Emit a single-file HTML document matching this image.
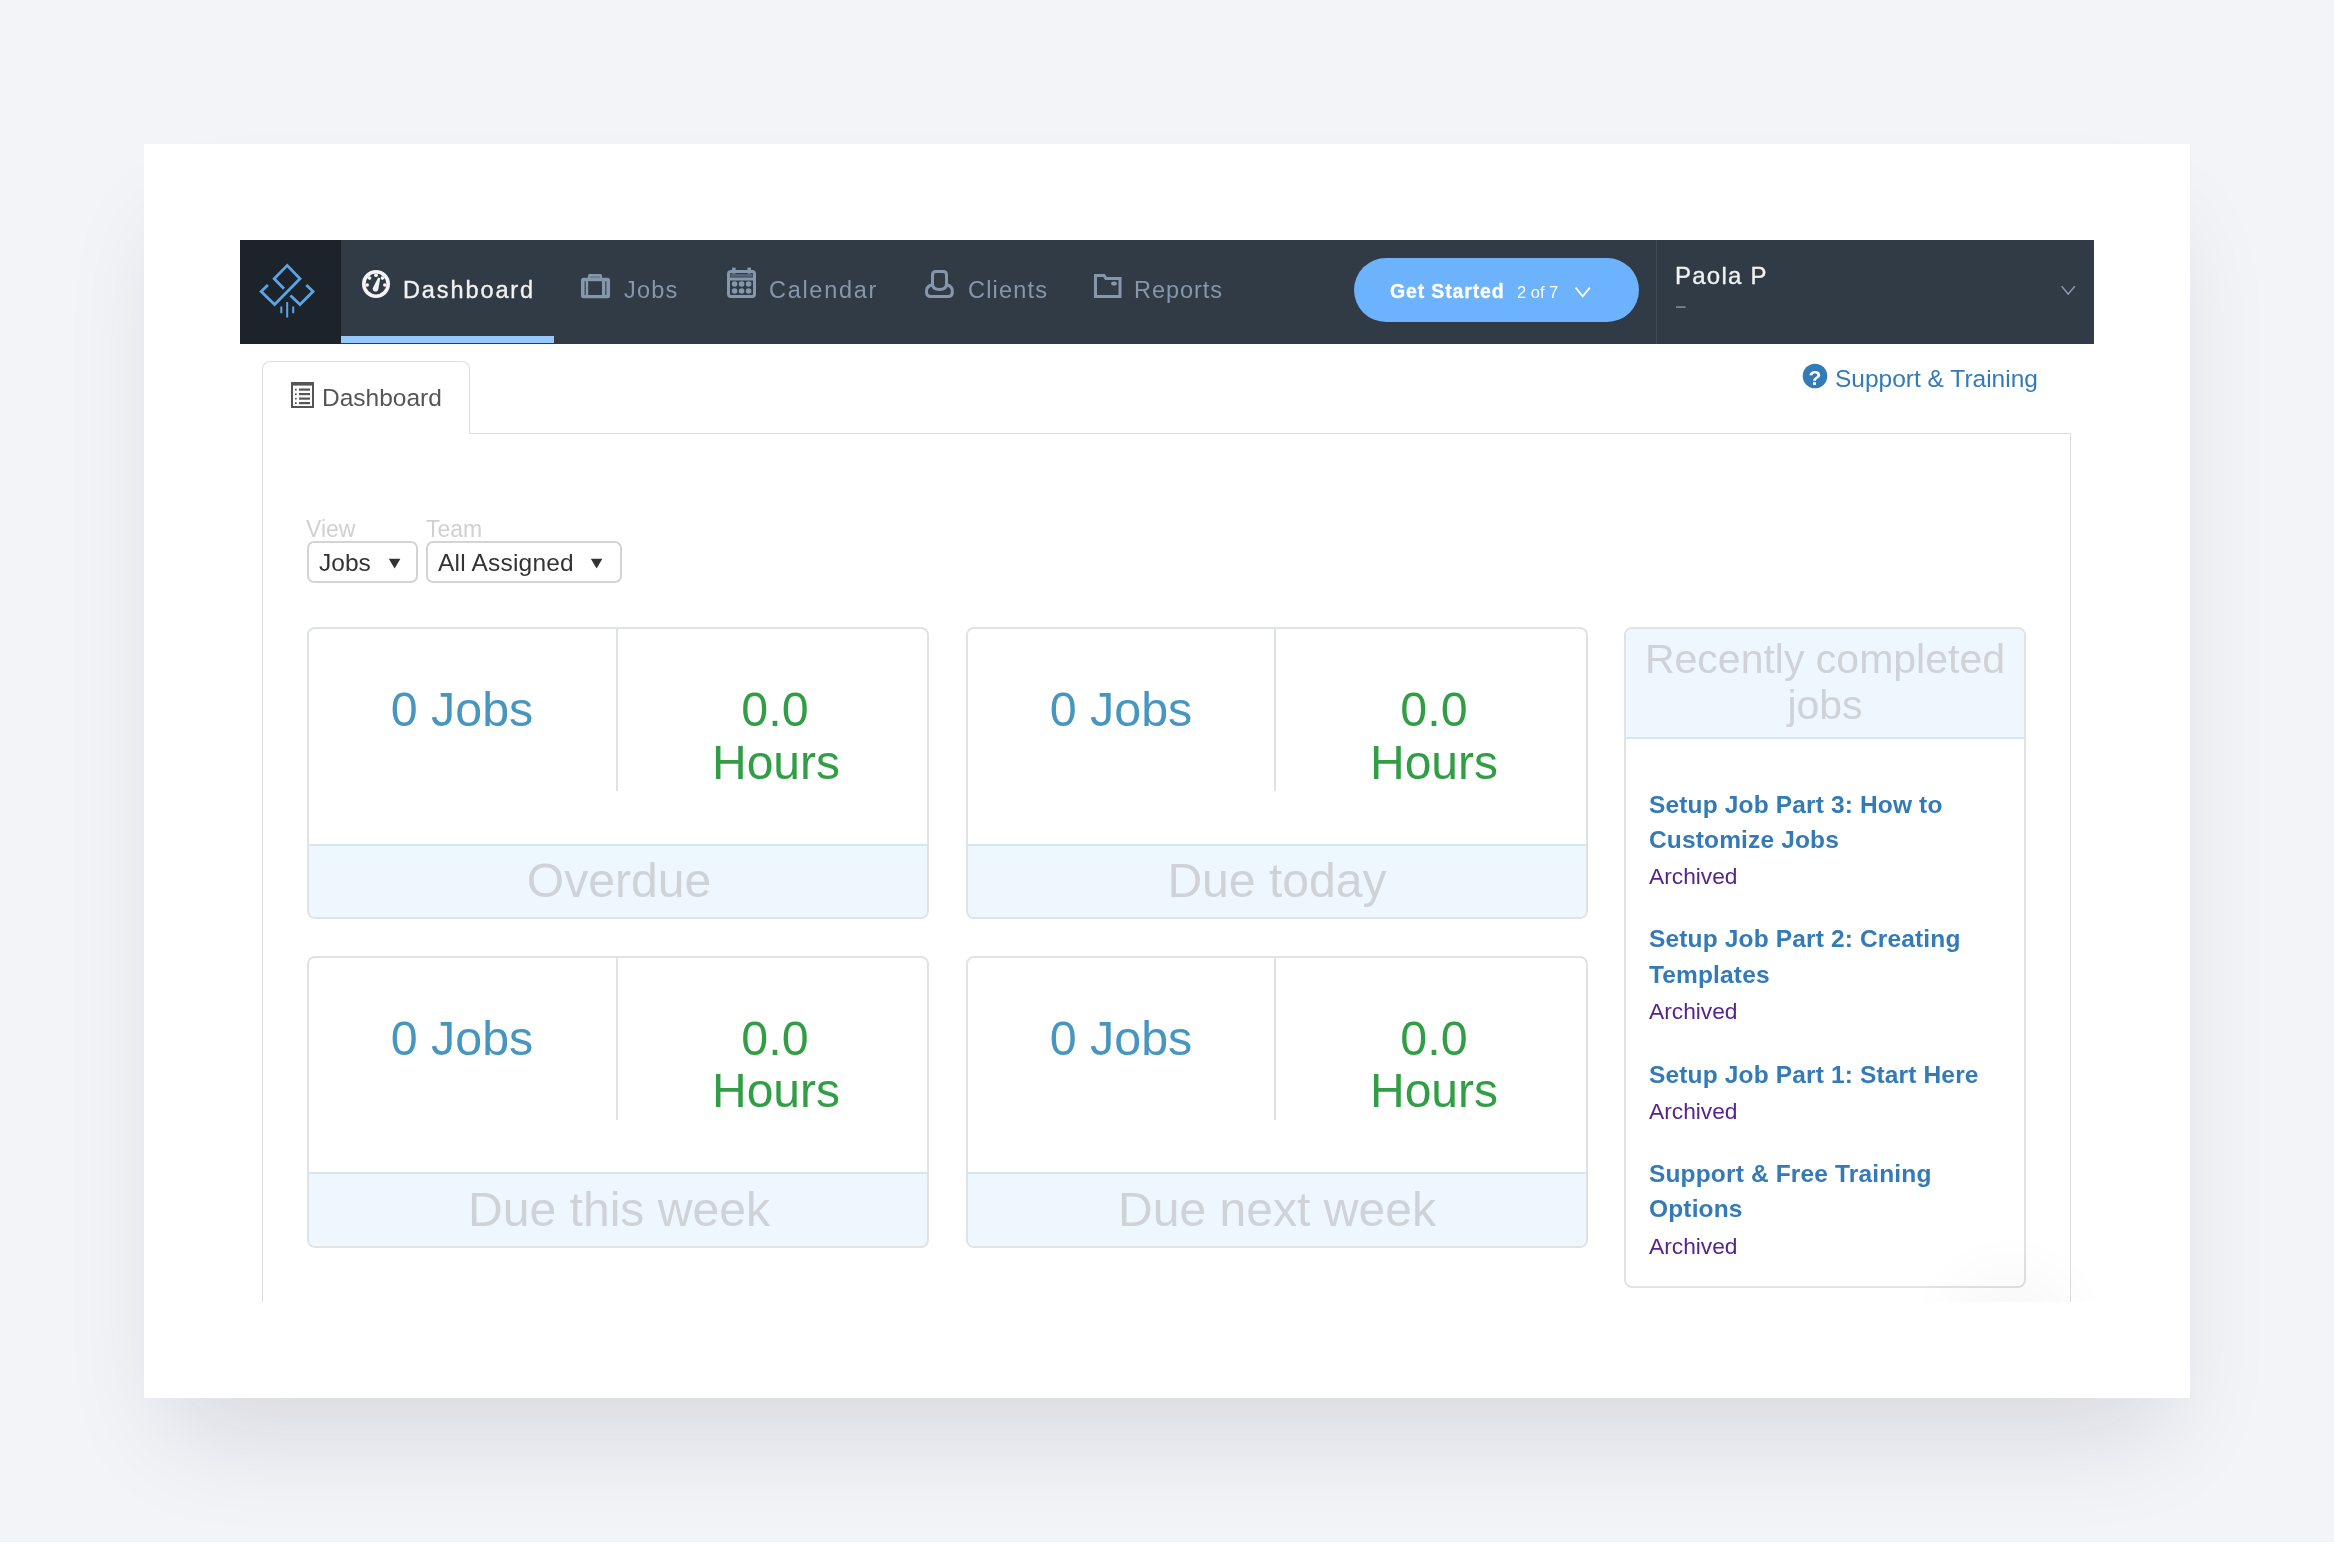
<!DOCTYPE html><html><head><meta charset="utf-8"><title>Dashboard</title><style>
*{margin:0;padding:0;box-sizing:border-box}
html,body{width:2334px;height:1560px;overflow:hidden;background:#fff;font-family:"Liberation Sans",sans-serif}
.abs{position:absolute}
.t{position:absolute;white-space:nowrap;will-change:transform}
#bg{position:absolute;left:0;top:0;width:2334px;height:1542px;background:#f3f4f8}
#card{position:absolute;left:144px;top:144px;width:2046px;height:1254px;background:#fff;
  box-shadow:0 60px 100px -25px rgba(20,20,35,0.12)}
#nav{position:absolute;left:240px;top:240px;width:1854px;height:103.5px;background:#303b45}
#logo{position:absolute;left:240px;top:240px;width:101px;height:103.5px;background:#1d232b}
#uline{position:absolute;left:341px;top:336.2px;width:213px;height:7.3px;background:#96c8fc}
#gs{position:absolute;left:1354px;top:258px;width:285px;height:64px;border-radius:32px;background:#6cb2fc}
#vdiv{position:absolute;left:1656px;top:240px;width:1.2px;height:103.5px;background:#3e4a56}
.box{position:absolute;border:2px solid #dfe3e5;border-radius:8px;background:#fff;overflow:hidden}
.foot{position:absolute;left:0;right:0;bottom:0;background:#edf7fd;border-top:2px solid #d3e6f2}
.sel{position:absolute;border:2px solid #d4d4d4;border-radius:7px;background:#fff}
</style></head><body>
<div id="bg"></div><div id="card"></div>
<div id="nav"></div><div id="logo"></div><div id="uline"></div><div id="vdiv"></div>
<div id="gs"></div>
<svg class="abs" style="left:0;top:0" width="2334" height="1560" viewBox="0 0 2334 1560"><path d="M284,288.7 L274.2,278.8 L287.2,265.4 L300,278.8 L274.6,304.5 L261.2,291.5 L267.9,285.1" fill="none" stroke="#5aa5e6" stroke-width="2.8" stroke-linejoin="miter"/><path d="M306.3,285.1 L313,291.5 L300,304.5 L290.4,295.4" fill="none" stroke="#5aa5e6" stroke-width="2.8"/><path d="M287.2,302 V317.6 M281.3,306.6 V313.3 M293.2,306.6 V313.3" fill="none" stroke="#5aa5e6" stroke-width="2"/><circle cx="376" cy="284" r="12.2" fill="none" stroke="#f4f4f4" stroke-width="3.6"/><g fill="#f4f4f4"><circle cx="376" cy="275.2" r="1.9"/><circle cx="369.6" cy="278.1" r="1.8"/><circle cx="382.4" cy="278.1" r="1.8"/><circle cx="367.2" cy="285" r="1.8"/><circle cx="384.8" cy="285" r="1.8"/><path d="M372.6,288.4 L378.2,277.4 L380.2,278.2 L378.2,290 A3,3 0 0 1 372.6,288.4 Z"/></g><g fill="#8797ab"><rect x="588" y="274" width="14" height="5" rx="1.5"/><rect x="581" y="277.8" width="29" height="20.4" rx="2.5"/></g><g fill="#303b45"><rect x="588.2" y="281.2" width="13.8" height="13.8"/><rect x="584.6" y="281.2" width="1.1" height="13.8"/><rect x="605.3" y="281.2" width="1.1" height="13.8"/><rect x="590" y="276.6" width="10" height="1" opacity=".5"/></g><rect x="728.5" y="271.5" width="26" height="25" rx="2.5" fill="none" stroke="#8797ab" stroke-width="3"/><g fill="#8797ab"><rect x="732" y="267.6" width="3.6" height="6"/><rect x="747.4" y="267.6" width="3.6" height="6"/><rect x="729" y="277.5" width="25" height="3"/><rect x="730.5" y="274" width="22" height="2.8" opacity=".45"/><circle cx="734.6" cy="284" r="2.8"/><circle cx="741.6" cy="284" r="2.8"/><circle cx="748.6" cy="284" r="2.8"/><circle cx="734.6" cy="291" r="2.8"/><circle cx="741.6" cy="291" r="2.8"/><circle cx="748.6" cy="291" r="2.8"/></g><g fill="none" stroke="#8797ab" stroke-width="3" stroke-linejoin="round"><path d="M932.5,284 V275 Q932.5,271.5 936,271.5 H943 Q946.5,271.5 946.5,275 V284 Q946.5,289.5 939.5,289.5 Q932.5,289.5 932.5,284 Z"/><path d="M932.3,284.8 Q926.5,286 926.5,291 V292 Q926.5,296.5 931,296.5 H948 Q952.3,296.5 952.3,292 V291 Q952.3,286 946.7,284.8"/></g><path d="M1095.5,275.5 H1104 L1106,278.5 H1120 V296.6 H1095.5 Z" fill="none" stroke="#8797ab" stroke-width="3" stroke-linejoin="miter"/><ellipse cx="1114" cy="283.6" rx="2.9" ry="2" fill="#8797ab"/><path d="M1575.6,287.6 L1582.7,296.4 L1589.8,287.6" fill="none" stroke="#ffffff" stroke-width="1.7"/><path d="M2061.6,286.2 L2068.2,294 L2074.8,286.2" fill="none" stroke="#8797ab" stroke-width="1.5"/><rect x="1676" y="306.4" width="9.6" height="1.4" fill="#8797ab"/></svg>
<div class="t" style="top:278.70px;font-size:23.5px;line-height:23.5px;color:#f2f2f2;font-weight:400;letter-spacing:1.9px;left:403.40px;-webkit-text-stroke:0.35px currentColor;">Dashboard</div>
<div class="t" style="top:278.70px;font-size:23.5px;line-height:23.5px;color:#8797ab;font-weight:400;letter-spacing:1.2px;left:624.00px;">Jobs</div>
<div class="t" style="top:278.70px;font-size:23.5px;line-height:23.5px;color:#8797ab;font-weight:400;letter-spacing:1.7px;left:769.00px;">Calendar</div>
<div class="t" style="top:278.70px;font-size:23.5px;line-height:23.5px;color:#8797ab;font-weight:400;letter-spacing:1.2px;left:967.50px;">Clients</div>
<div class="t" style="top:278.70px;font-size:23.5px;line-height:23.5px;color:#8797ab;font-weight:400;letter-spacing:0.95px;left:1133.50px;">Reports</div>
<div class="t" style="top:282.09px;font-size:19.5px;line-height:19.5px;color:#ffffff;font-weight:700;letter-spacing:0.85px;left:1389.50px;-webkit-text-stroke:0.3px #fff;">Get Started</div>
<div class="t" style="top:284.03px;font-size:16.5px;line-height:16.5px;color:#ffffff;font-weight:400;left:1517.40px;">2 of 7</div>
<div class="t" style="top:263.98px;font-size:24px;line-height:24px;color:#f2f2f2;font-weight:400;letter-spacing:1.25px;left:1675.00px;-webkit-text-stroke:0.35px currentColor;">Paola P</div>
<div class="abs" style="left:262px;top:361px;width:208px;height:73px;border:1.5px solid #dedede;border-bottom:none;border-radius:8px 8px 0 0;background:#fff"></div>
<div class="abs" style="left:469.2px;top:432.6px;width:1602px;height:1.5px;background:#dedede"></div>
<div class="abs" style="left:261.5px;top:434px;width:1.5px;height:868px;background:#dedede"></div>
<div class="abs" style="left:2069.8px;top:433px;width:1.5px;height:869px;background:#dedede"></div>
<svg class="abs" style="left:0;top:0" width="2334" height="1560" viewBox="0 0 2334 1560"><rect x="292" y="383" width="21" height="24" fill="none" stroke="#555" stroke-width="2"/><rect x="291" y="382" width="23" height="3.6" fill="#555"/><g fill="#555"><rect x="299" y="388.5" width="11" height="2.2"/><rect x="299" y="393" width="11" height="2.2"/><rect x="299" y="397.5" width="11" height="2.2"/><rect x="299" y="402" width="11" height="2.2"/><rect x="295" y="388.8" width="1.7" height="1.7"/><rect x="295" y="393.3" width="1.7" height="1.7"/><rect x="295" y="397.8" width="1.7" height="1.7"/><rect x="295" y="402.3" width="1.7" height="1.7"/></g></svg>
<div class="t" style="top:386.06px;font-size:24.5px;line-height:24.5px;color:#555555;font-weight:400;left:322.00px;">Dashboard</div>
<svg class="abs" style="left:0;top:0" width="2334" height="1560" viewBox="0 0 2334 1560"><circle cx="1815" cy="376" r="12.3" fill="#337ab7"/></svg>
<div class="t" style="top:367.32px;font-size:21px;line-height:21px;color:#ffffff;font-weight:700;left:1215.30px;width:1200px;text-align:center;">?</div>
<div class="t" style="top:367.46px;font-size:24.5px;line-height:24.5px;color:#337ab7;font-weight:400;left:1835.00px;">Support &amp; Training</div>
<div class="t" style="top:517.83px;font-size:23px;line-height:23px;color:#d0d0d0;font-weight:400;left:305.60px;">View</div>
<div class="t" style="top:517.83px;font-size:23px;line-height:23px;color:#d0d0d0;font-weight:400;left:426.30px;">Team</div>
<div class="sel" style="left:307.2px;top:541.3px;width:111.2px;height:42.2px"></div>
<div class="sel" style="left:426.3px;top:541.3px;width:195.6px;height:42.2px"></div>
<div class="t" style="top:550.56px;font-size:24.5px;line-height:24.5px;color:#333333;font-weight:400;left:318.50px;">Jobs</div>
<div class="t" style="top:550.56px;font-size:24.5px;line-height:24.5px;color:#333333;font-weight:400;letter-spacing:0.2px;left:437.60px;">All Assigned</div>
<svg class="abs" style="left:0;top:0" width="2334" height="1560" viewBox="0 0 2334 1560"><path d="M388.8,558.8 H400.4 L394.6,568.5 Z" fill="#333"/><path d="M590.8,558.8 H602.4 L596.6,568.5 Z" fill="#333"/></svg>
<div class="box" style="left:307px;top:627px;width:622px;height:292px"><div class="foot" style="height:73.5px"></div></div>
<div class="abs" style="left:615.5px;top:628.5px;width:2px;height:162.5px;background:#dfe3e5"></div>
<div class="t" style="top:685.32px;font-size:48.4px;line-height:48.4px;color:#4796bf;font-weight:400;left:-137.80px;width:1200px;text-align:center;">0 Jobs</div>
<div class="t" style="top:685.32px;font-size:48.4px;line-height:48.4px;color:#319d45;font-weight:400;left:175.00px;width:1200px;text-align:center;">0.0</div>
<div class="t" style="top:738.66px;font-size:48px;line-height:48px;color:#319d45;font-weight:400;left:175.50px;width:1200px;text-align:center;">Hours</div>
<div class="t" style="top:856.47px;font-size:48.1px;line-height:48.1px;color:#cfd3d8;font-weight:400;left:18.50px;width:1200px;text-align:center;">Overdue</div>
<div class="box" style="left:965.5px;top:627px;width:622px;height:292px"><div class="foot" style="height:73.5px"></div></div>
<div class="abs" style="left:1274.0px;top:628.5px;width:2px;height:162.5px;background:#dfe3e5"></div>
<div class="t" style="top:685.32px;font-size:48.4px;line-height:48.4px;color:#4796bf;font-weight:400;left:520.70px;width:1200px;text-align:center;">0 Jobs</div>
<div class="t" style="top:685.32px;font-size:48.4px;line-height:48.4px;color:#319d45;font-weight:400;left:833.50px;width:1200px;text-align:center;">0.0</div>
<div class="t" style="top:738.66px;font-size:48px;line-height:48px;color:#319d45;font-weight:400;left:834.00px;width:1200px;text-align:center;">Hours</div>
<div class="t" style="top:856.47px;font-size:48.1px;line-height:48.1px;color:#cfd3d8;font-weight:400;left:677.00px;width:1200px;text-align:center;">Due today</div>
<div class="box" style="left:307px;top:955.5px;width:622px;height:292px"><div class="foot" style="height:73.5px"></div></div>
<div class="abs" style="left:615.5px;top:957.0px;width:2px;height:162.5px;background:#dfe3e5"></div>
<div class="t" style="top:1013.82px;font-size:48.4px;line-height:48.4px;color:#4796bf;font-weight:400;left:-137.80px;width:1200px;text-align:center;">0 Jobs</div>
<div class="t" style="top:1013.82px;font-size:48.4px;line-height:48.4px;color:#319d45;font-weight:400;left:175.00px;width:1200px;text-align:center;">0.0</div>
<div class="t" style="top:1067.16px;font-size:48px;line-height:48px;color:#319d45;font-weight:400;left:175.50px;width:1200px;text-align:center;">Hours</div>
<div class="t" style="top:1184.97px;font-size:48.1px;line-height:48.1px;color:#cfd3d8;font-weight:400;left:18.50px;width:1200px;text-align:center;">Due this week</div>
<div class="box" style="left:965.5px;top:955.5px;width:622px;height:292px"><div class="foot" style="height:73.5px"></div></div>
<div class="abs" style="left:1274.0px;top:957.0px;width:2px;height:162.5px;background:#dfe3e5"></div>
<div class="t" style="top:1013.82px;font-size:48.4px;line-height:48.4px;color:#4796bf;font-weight:400;left:520.70px;width:1200px;text-align:center;">0 Jobs</div>
<div class="t" style="top:1013.82px;font-size:48.4px;line-height:48.4px;color:#319d45;font-weight:400;left:833.50px;width:1200px;text-align:center;">0.0</div>
<div class="t" style="top:1067.16px;font-size:48px;line-height:48px;color:#319d45;font-weight:400;left:834.00px;width:1200px;text-align:center;">Hours</div>
<div class="t" style="top:1184.97px;font-size:48.1px;line-height:48.1px;color:#cfd3d8;font-weight:400;left:677.00px;width:1200px;text-align:center;">Due next week</div>
<div class="box" style="left:1624px;top:627px;width:401.5px;height:661px"><div class="abs" style="left:0;top:0;right:0;height:110px;background:#edf7fd;border-bottom:2px solid #d3e6f2"></div></div>
<div class="t" style="top:638.59px;font-size:41px;line-height:41px;color:#cfd3d8;font-weight:400;left:1224.50px;width:1200px;text-align:center;">Recently completed</div>
<div class="t" style="top:684.79px;font-size:41px;line-height:41px;color:#cfd3d8;font-weight:400;left:1224.50px;width:1200px;text-align:center;">jobs</div>
<div class="t" style="top:792.86px;font-size:24.5px;line-height:24.5px;color:#337ab7;font-weight:700;letter-spacing:0.15px;left:1649.00px;">Setup Job Part 3: How to</div>
<div class="t" style="top:827.86px;font-size:24.5px;line-height:24.5px;color:#337ab7;font-weight:700;letter-spacing:0.15px;left:1649.00px;">Customize Jobs</div>
<div class="t" style="top:865.14px;font-size:22.75px;line-height:22.75px;color:#57238c;font-weight:400;left:1649.00px;">Archived</div>
<div class="t" style="top:927.36px;font-size:24.5px;line-height:24.5px;color:#337ab7;font-weight:700;letter-spacing:0.15px;left:1649.00px;">Setup Job Part 2: Creating</div>
<div class="t" style="top:962.86px;font-size:24.5px;line-height:24.5px;color:#337ab7;font-weight:700;letter-spacing:0.15px;left:1649.00px;">Templates</div>
<div class="t" style="top:999.64px;font-size:22.75px;line-height:22.75px;color:#57238c;font-weight:400;left:1649.00px;">Archived</div>
<div class="t" style="top:1062.76px;font-size:24.5px;line-height:24.5px;color:#337ab7;font-weight:700;letter-spacing:0.15px;left:1649.00px;">Setup Job Part 1: Start Here</div>
<div class="t" style="top:1099.94px;font-size:22.75px;line-height:22.75px;color:#57238c;font-weight:400;left:1649.00px;">Archived</div>
<div class="t" style="top:1162.06px;font-size:24.5px;line-height:24.5px;color:#337ab7;font-weight:700;letter-spacing:0.15px;left:1649.00px;">Support &amp; Free Training</div>
<div class="t" style="top:1197.36px;font-size:24.5px;line-height:24.5px;color:#337ab7;font-weight:700;letter-spacing:0.15px;left:1649.00px;">Options</div>
<div class="t" style="top:1234.54px;font-size:22.75px;line-height:22.75px;color:#57238c;font-weight:400;left:1649.00px;">Archived</div>
<div class="abs" style="left:1880px;top:1150px;width:215px;height:152px;overflow:hidden"><div class="abs" style="left:0;top:0;width:300px;height:300px;background:radial-gradient(circle at 130px 185px, rgba(0,0,0,0.035) 0, rgba(0,0,0,0) 100px)"></div></div>
</body></html>
